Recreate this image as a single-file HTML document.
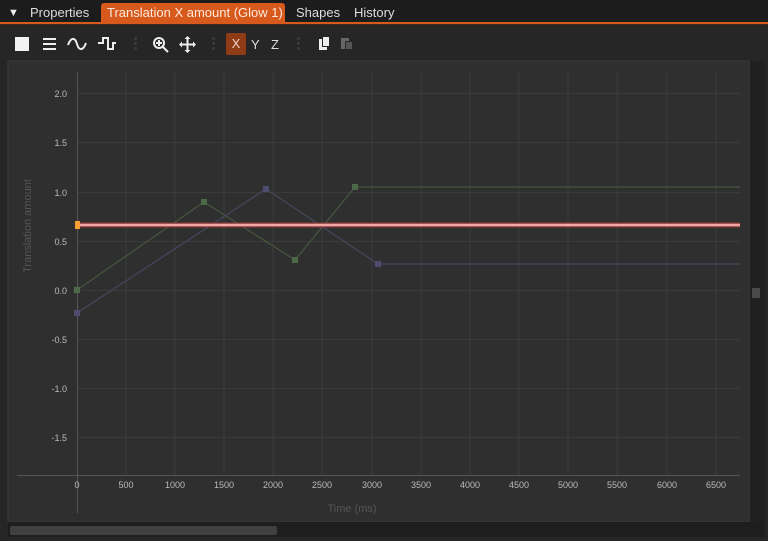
<!DOCTYPE html>
<html><head><meta charset="utf-8"><style>
*{margin:0;padding:0;box-sizing:border-box}
body{width:768px;height:541px;background:#262626;font-family:"Liberation Sans",sans-serif;position:relative;overflow:hidden}
.tabs{position:absolute;left:0;top:0;width:768px;height:23px;background:#1c1c1c}
.tab{position:absolute;top:3px;height:20px;line-height:20px;font-size:13px;color:#ddd}
.sep{position:absolute;left:0;top:22px;width:768px;height:3px;background:#d8591c;border-bottom:1px solid #3a2a22}
.tb{position:absolute;top:25px;left:0;width:768px;height:36px;background:#262626}
.ic{position:absolute;color:#eee}
.dots{position:absolute;width:3px;top:37px}
.dots i{display:block;width:3px;height:3px;background:#3a3a3a;margin-bottom:2px;border-radius:1px}
</style></head><body>
<div class="tabs">
<div class="tab" style="left:8px;font-size:11px;color:#eee">&#9660;</div>
<div class="tab" style="left:30px">Properties</div>
<div class="tab" style="left:101px;width:184px;background:#d8591c;border-radius:3px 3px 0 0;padding-left:6px;color:#fbe9dd">Translation X amount (Glow 1)</div>
<div class="tab" style="left:296px">Shapes</div>
<div class="tab" style="left:354px">History</div>
</div>
<div class="sep"></div>
<div class="tb">
<div style="position:absolute;left:15px;top:12px;width:14px;height:14px;background:#f2f2f2"></div>
<div style="position:absolute;left:43px;top:13px;width:13px;height:12px;border-top:2px solid #eee;border-bottom:2px solid #eee"><div style="margin-top:3px;height:2px;background:#eee"></div></div>
<svg style="position:absolute;left:66px;top:12px" width="22" height="14"><path d="M2 8 C5 0,9 0,11 7 C13 14,17 14,20 6" stroke="#eee" stroke-width="2" fill="none"/></svg>
<svg style="position:absolute;left:97px;top:11px" width="20" height="16"><path d="M1 7 H6 V2 H11 V13 H16 V7 H19" stroke="#eee" stroke-width="2" fill="none"/></svg>
<svg style="position:absolute;left:152px;top:11px" width="18" height="18"><circle cx="7" cy="7" r="5" stroke="#eee" stroke-width="2" fill="none"/><path d="M7 4v6M4 7h6M11 11l5 5" stroke="#eee" stroke-width="2"/></svg>
<svg style="position:absolute;left:179px;top:11px" width="17" height="17"><path d="M8.5 1v15M1 8.5h15" stroke="#eee" stroke-width="2"/><path d="M8.5 0l3 3h-6zM8.5 17l3-3h-6zM0 8.5l3 3v-6zM17 8.5l-3 3v-6z" fill="#eee"/></svg>
<div style="position:absolute;left:226px;top:8px;width:20px;height:22px;background:#8f3c16;border-radius:2px;color:#f0d0c0;font-size:13px;line-height:22px;text-align:center">X</div>
<div class="ic" style="left:251px;top:12px;font-size:13px;color:#ddd">Y</div>
<div class="ic" style="left:271px;top:12px;font-size:13px;color:#ddd">Z</div>
<div style="position:absolute;left:319px;top:14px;width:8px;height:11px;background:#eee"></div>
<div style="position:absolute;left:322px;top:11px;width:8px;height:11px;background:#eee;border:1px solid #262626"></div>
<div style="position:absolute;left:341px;top:13px;width:8px;height:11px;background:#666"></div>
<div style="position:absolute;left:345px;top:16px;width:8px;height:9px;background:#555;border:1px solid #262626"></div>
</div>
<div class="dots" style="left:134px"><i></i><i></i><i></i></div>
<div class="dots" style="left:212px"><i></i><i></i><i></i></div>
<div class="dots" style="left:297px"><i></i><i></i><i></i></div>
<svg style="position:absolute;left:0;top:0" width="768" height="541">
<rect x="8" y="61" width="742" height="461" fill="#2f2f2f" stroke="#3a3a3a"/>
<g stroke="#3b3b3b" stroke-width="1">
<line x1="126" y1="72" x2="126" y2="475"/><line x1="175" y1="72" x2="175" y2="475"/><line x1="224" y1="72" x2="224" y2="475"/><line x1="273" y1="72" x2="273" y2="475"/><line x1="322" y1="72" x2="322" y2="475"/><line x1="372" y1="72" x2="372" y2="475"/><line x1="421" y1="72" x2="421" y2="475"/><line x1="470" y1="72" x2="470" y2="475"/><line x1="519" y1="72" x2="519" y2="475"/><line x1="568" y1="72" x2="568" y2="475"/><line x1="617" y1="72" x2="617" y2="475"/><line x1="667" y1="72" x2="667" y2="475"/><line x1="716" y1="72" x2="716" y2="475"/>
<line x1="77" y1="93.5" x2="740" y2="93.5"/><line x1="77" y1="142.5" x2="740" y2="142.5"/><line x1="77" y1="192.5" x2="740" y2="192.5"/><line x1="77" y1="241.5" x2="740" y2="241.5"/><line x1="77" y1="290.5" x2="740" y2="290.5"/><line x1="77" y1="339.5" x2="740" y2="339.5"/><line x1="77" y1="388.5" x2="740" y2="388.5"/><line x1="77" y1="437.5" x2="740" y2="437.5"/>
</g>
<line x1="77.5" y1="72" x2="77.5" y2="513" stroke="#555"/>
<line x1="17" y1="475.5" x2="740" y2="475.5" stroke="#555"/>
<g font-size="9" fill="#bbb" text-anchor="end">
<text x="67" y="97">2.0</text><text x="67" y="146">1.5</text><text x="67" y="196">1.0</text><text x="67" y="245">0.5</text><text x="67" y="294">0.0</text><text x="67" y="343">-0.5</text><text x="67" y="392">-1.0</text><text x="67" y="441">-1.5</text>
</g>
<g font-size="9" fill="#bbb" text-anchor="middle">
<text x="77" y="488">0</text><text x="126" y="488">500</text><text x="175" y="488">1000</text><text x="224" y="488">1500</text><text x="273" y="488">2000</text><text x="322" y="488">2500</text><text x="372" y="488">3000</text><text x="421" y="488">3500</text><text x="470" y="488">4000</text><text x="519" y="488">4500</text><text x="568" y="488">5000</text><text x="617" y="488">5500</text><text x="667" y="488">6000</text><text x="716" y="488">6500</text>
</g>
<text x="352" y="512" font-size="11" fill="#555" text-anchor="middle">Time (ms)</text>
<text transform="translate(31,226) rotate(-90)" font-size="11" fill="#555" text-anchor="middle">Translation amount</text>
<polyline points="77,290 204,202 295,260 355,187 740,187" fill="none" stroke="#46573f" stroke-width="1.2"/>
<polyline points="77,313 266,189 378,264 740,264" fill="none" stroke="#47465e" stroke-width="1.2"/>
<g fill="#4d6a48"><rect x="74" y="287" width="6" height="6"/><rect x="201" y="199" width="6" height="6"/><rect x="292" y="257" width="6" height="6"/><rect x="352" y="184" width="6" height="6"/></g>
<g fill="#4e4c70"><rect x="74" y="310" width="6" height="6"/><rect x="263" y="186" width="6" height="6"/><rect x="375" y="261" width="6" height="6"/></g>
<line x1="77" y1="225" x2="740" y2="225" stroke="#8a3a3a" stroke-width="5"/>
<line x1="77" y1="225" x2="740" y2="225" stroke="#f2a7a5" stroke-width="2.5"/>
<rect x="75" y="221" width="5" height="8" fill="#f5a030"/>
<rect x="750" y="61" width="15" height="461" fill="#202020"/>
<rect x="752" y="288" width="8" height="10" fill="#4a4a4a"/>
<rect x="8" y="522" width="757" height="15" fill="#1e1e1e"/>
<rect x="10" y="526" width="267" height="9" rx="2" fill="#404040"/>
</svg>
</body></html>
